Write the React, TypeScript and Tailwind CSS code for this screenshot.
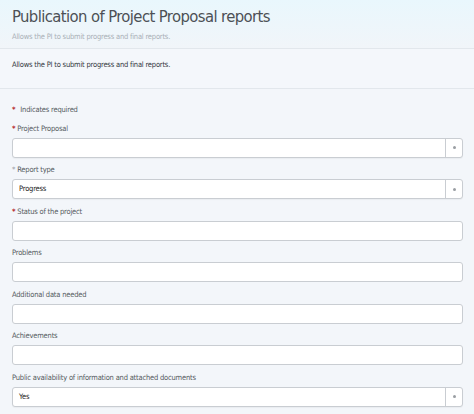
const FONT = "font-['Liberation_Sans_Narrow','DejaVu_Sans_Condensed','Liberation_Sans',sans-serif]";

function Req({ muted }: { muted?: boolean }) {
  return <span className={muted ? "text-[#9aa0a6] mr-[2px]" : "text-[#b3262b] font-bold mr-[2px]"}>*</span>;
}

function SelectBox({ value }: { value?: string }) {
  return (
    <div className="flex h-[20px] bg-white border border-[#c9cdd2] rounded-[3px] shadow-[0_1px_1px_rgba(0,0,0,0.04)]">
      <div className="flex-1 flex items-center px-[6px] text-[7.5px] tracking-[-0.2px] text-[#222]">{value}</div>
      <div className="w-[17px] border-l border-[#c9cdd2] flex items-center justify-center">
        <span className="block w-[3px] h-[3px] rounded-full bg-[#9a9ea3]" />
      </div>
    </div>
  );
}

function TextBox({ value }: { value?: string }) {
  return (
    <div className="flex items-center h-[20px] bg-white border border-[#c9cdd2] rounded-[3px] px-[6px] text-[7.5px] text-[#222]">
      {value}
    </div>
  );
}

function Field({ label, req, muted, children }: { label: string; req?: boolean; muted?: boolean; children: React.ReactNode }) {
  return (
    <div className="flex flex-col">
      <div className="text-[7.5px] tracking-[-0.2px] text-[#555b61] leading-[10px] mb-[4px] h-[10px] whitespace-nowrap">
        {req && <Req muted={muted} />}
        {label}
      </div>
      {children}
    </div>
  );
}

export default function App() {
  return (
    <div className={`${FONT} w-[474px] h-[414px] bg-[#f3f6fa] overflow-hidden`}>
      <div className="bg-gradient-to-b from-[#e9f7fd] to-[#f1f5f9] px-[12px] pt-[7px] pb-[5px] border-b border-[#e2e7ec]">
        <h1 className="text-[16.5px] leading-[20px] tracking-[-0.6px] text-[#4c5055] whitespace-nowrap">Publication of Project Proposal reports</h1>
        <p className="text-[7.5px] leading-[12px] tracking-[-0.2px] mt-[4px] text-[#a9b0b7]">Allows the PI to submit progress and final reports.</p>
      </div>
      <div className="px-[12px] pt-[10px] pb-[17px] border-b border-[#e2e7ec] bg-[#f4f7fb]">
        <p className="text-[7.5px] leading-[12px] tracking-[-0.2px] text-[#33383d]">Allows the PI to submit progress and final reports.</p>
      </div>
      <div className="pl-[12px] pr-[11px] pt-[15px] flex flex-col gap-[7.5px]">
        <div className="text-[7.5px] leading-[11px] tracking-[-0.2px] text-[#555b61] mb-[1px]">
          <span className="text-[#b3262b] font-bold mr-[5px]">*</span>Indicates required
        </div>
        <Field label="Project Proposal" req>
          <SelectBox />
        </Field>
        <Field label="Report type" req muted>
          <SelectBox value="Progress" />
        </Field>
        <Field label="Status of the project" req>
          <TextBox />
        </Field>
        <Field label="Problems">
          <TextBox />
        </Field>
        <Field label="Additional data needed">
          <TextBox />
        </Field>
        <Field label="Achievements">
          <TextBox />
        </Field>
        <Field label="Public availability of information and attached documents">
          <SelectBox value="Yes" />
        </Field>
      </div>
    </div>
  );
}
